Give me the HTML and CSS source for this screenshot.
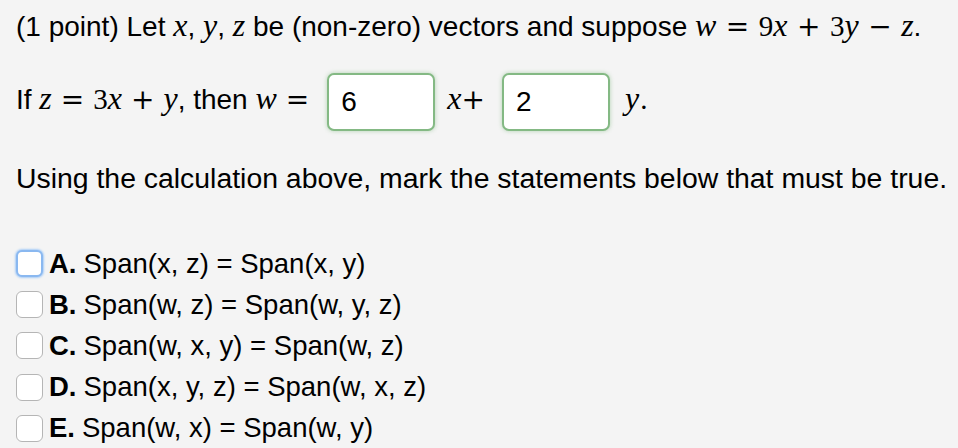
FILE: index.html
```html
<!DOCTYPE html>
<html>
<head>
<meta charset="utf-8">
<link rel="stylesheet" href="styles.css">
</head>
<body>
<div class="problem">
  <p class="line l1">(1 point) Let <span class="m">x</span>, <span class="m">y</span>, <span class="m">z</span> be (non-zero) vectors and suppose <span class="m">w</span><span class="mo">=</span><span class="mn">9</span><span class="m">x</span><span class="mo">+</span><span class="mn">3</span><span class="m">y</span><span class="mo">−</span><span class="m">z</span>.</p>
  <p class="line l2">If <span class="m">z</span><span class="mo">=</span><span class="mn">3</span><span class="m">x</span><span class="mo">+</span><span class="m">y</span>, then <span class="m">w</span><span class="mo">=</span><span class="box">6</span><span class="m gap">x</span><span class="mp">+</span><span class="box">2</span><span class="m gap2">y</span><span class="mn">.</span></p>
  <p class="line l3">Using the calculation above, mark the statements below that must be true.</p>
  <ul class="opts">
    <li><span class="cb focus"></span><b>A.</b> Span(x, z) = Span(x, y)</li>
    <li><span class="cb"></span><b>B.</b> Span(w, z) = Span(w, y, z)</li>
    <li><span class="cb"></span><b>C.</b> Span(w, x, y) = Span(w, z)</li>
    <li><span class="cb"></span><b>D.</b> Span(x, y, z) = Span(w, x, z)</li>
    <li><span class="cb"></span><b>E.</b> Span(w, x) = Span(w, y)</li>
  </ul>
</div>
</body>
</html>
```
FILE: styles.css
```css
html, body { margin: 0; padding: 0; background: #f4f4f4; }
body { font-family: "Liberation Sans", Arial, sans-serif; font-size: 28px; color: #000; }
.problem { padding: 9px 0 0 16px; }
.line { margin: 0; white-space: nowrap; }
.l1 { line-height: 32px; }
.l2 { margin-top: 24px; line-height: 62px; height: 62px; }
.l3 { margin-top: 33px; line-height: 32px; font-size: 28.4px; }
.m { font-family: "Liberation Serif", "Times New Roman", serif; font-style: italic; font-size: 32px; }
.mn { font-family: "Liberation Serif", "Times New Roman", serif; font-size: 29px; }
.mo, .mp { font-family: "DejaVu Serif", serif; font-size: 28px; }
.mo { padding: 0 9px; }
.l1 .mo { padding: 0 9.5px; }
.gap { margin-left: 12px; }
.gap2 { margin-left: 15px; }
.l2 .mn:last-child { margin-left: 1px; }
.box { display: inline-block; vertical-align: middle; box-sizing: border-box; width: 108px; height: 58px; line-height: 54px; margin-left: 9px; background: #fff; border: 2px solid #84b984; border-radius: 7px; box-shadow: 0 0 4px rgba(100, 170, 100, 0.45); padding-left: 12px; font-family: "Liberation Sans", Arial, sans-serif; font-size: 28px; }
.mp + .box { margin-left: 17px; }
.opts { list-style: none; margin: 49px 0 0 0; padding: 0; font-size: 27.5px; }
.opts li { display: flex; align-items: center; height: 41.2px; line-height: 32px; }
.opts b { margin-right: 7px; }
.cb { box-sizing: border-box; width: 27px; height: 27px; border: 1px solid #b5b5b5; border-radius: 6px; background: #fff; margin-right: 6px; flex: none; }
.cb.focus { border: 2px solid #8ab8f0; box-shadow: 0 0 2px 1px #a9cdf7; }
```
